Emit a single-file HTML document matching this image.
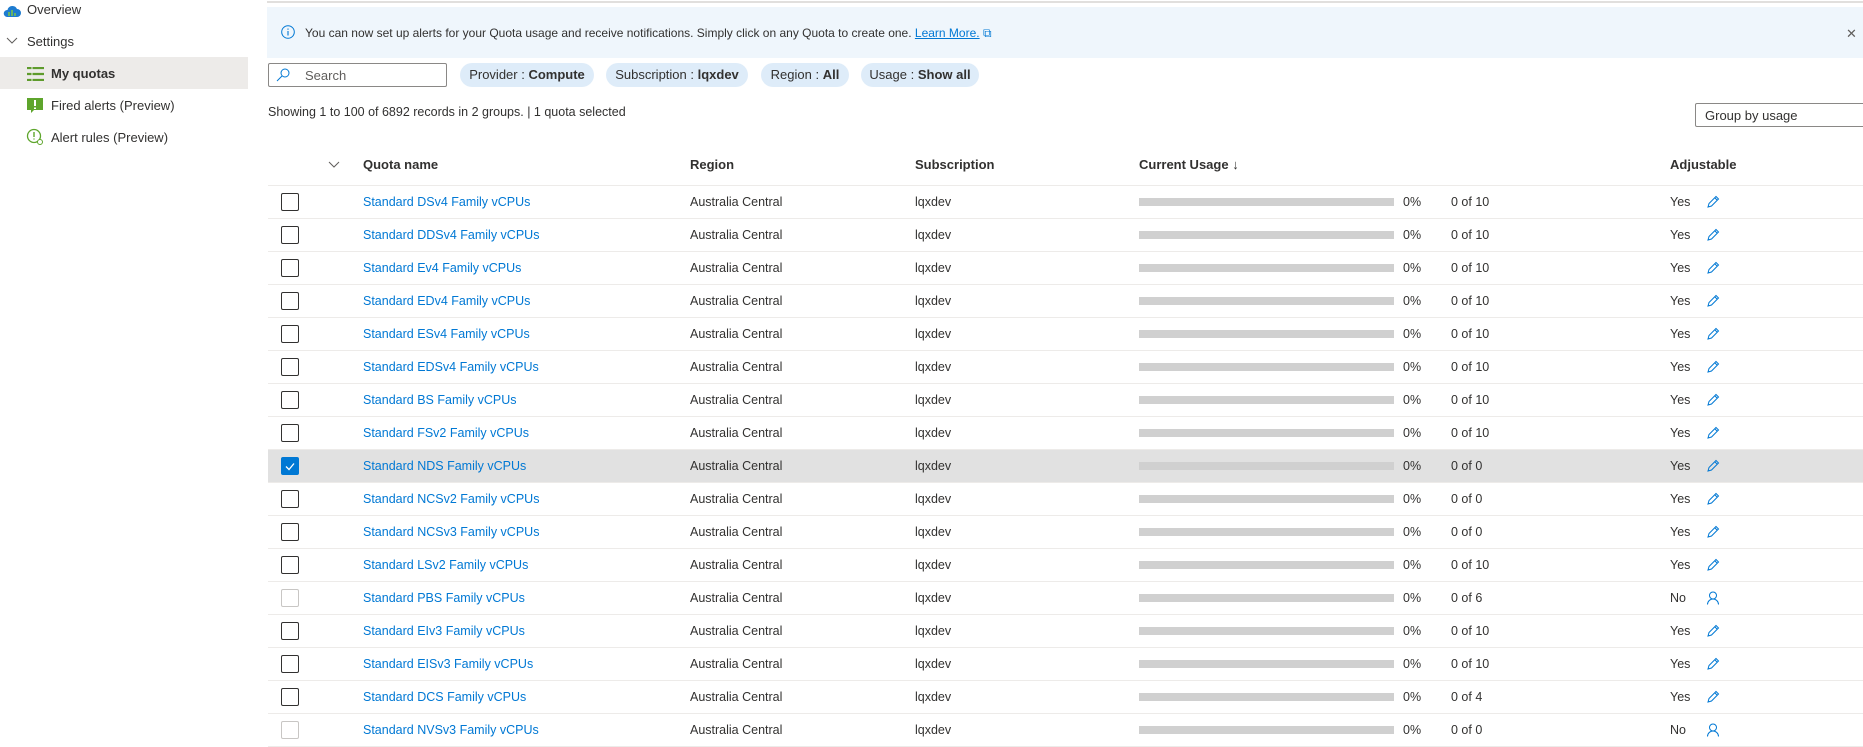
<!DOCTYPE html>
<html><head><meta charset="utf-8"><style>
*{margin:0;padding:0;box-sizing:border-box}
body{width:1863px;height:730px;overflow:hidden;background:#fff;font-family:"Liberation Sans",sans-serif;font-size:13px;color:#323130;position:relative}
.a{position:absolute;white-space:nowrap}
.side{position:absolute;left:0;top:0;width:248px;height:730px}
.row{position:absolute;left:268px;right:0;height:33px;border-bottom:1px solid #edebe9}
.row .a{top:9px}
.cb{position:absolute;left:13px;top:7px;width:18px;height:18px;border:1px solid #323130;border-radius:2px;background:#fff}
.bar{position:absolute;left:871px;top:12px;width:255px;height:8px;background:#d0d0d0}
.pill{position:absolute;top:63px;height:24px;border-radius:12px;background:#deecf9;line-height:24px;text-align:center;font-size:13px}
</style></head><body>
<div class="side">
 <svg class="a" style="left:3px;top:4px" width="18" height="14" viewBox="0 0 18 14"><path d="M4 13h10a4 4 0 0 0 0-8 5 5 0 0 0-9.5 1A3.5 3.5 0 0 0 4 13z" fill="#1d7bd0"/><path d="M6 12V8M9 12V6M12 12V9" stroke="#7fc644" stroke-width="1.5"/></svg>
 <div class="a" style="left:27px;top:2px">Overview</div>
 <svg class="a" style="left:6px;top:37px" width="12" height="8"><path d="M1 1l5 5 5-5" fill="none" stroke="#605e5c"/></svg>
 <div class="a" style="left:27px;top:34px">Settings</div>
 <div class="a" style="left:0;top:57px;width:248px;height:32px;background:#edebe9"></div>
 <svg class="a" style="left:27px;top:67px" width="17" height="14"><path d="M0 1h17M0 7h17M0 13h17" stroke="#5e9b2c" stroke-width="2.2"/><path d="M5 0v14" stroke="#edebe9" stroke-width="1"/></svg>
 <div class="a" style="left:51px;top:66px;font-weight:bold;color:#323130">My quotas</div>
 <svg class="a" style="left:27px;top:98px" width="16" height="16"><path d="M0 0h16v12H7l-3 3v-3H0z" fill="#5ea52c"/><path d="M8 2v6M8 9.5v1.5" stroke="#fff" stroke-width="2"/></svg>
 <div class="a" style="left:51px;top:98px">Fired alerts (Preview)</div>
 <svg class="a" style="left:26px;top:128px" width="18" height="18"><circle cx="8" cy="8" r="6.5" fill="none" stroke="#5ea52c" stroke-width="1.3"/><path d="M8 4v5M8 10.5v1" stroke="#5ea52c" stroke-width="1.4"/><circle cx="14" cy="14" r="2.5" fill="#fff" stroke="#5ea52c"/></svg>
 <div class="a" style="left:51px;top:130px">Alert rules (Preview)</div>
</div>
<div class="a" style="left:267px;top:1px;right:0;height:2px;background:#e1dfdd"></div>
<div class="a" style="left:267px;top:7px;right:0;height:51px;background:#eff6fc"></div>
<svg class="a" style="left:281px;top:25px" width="14" height="14"><circle cx="7" cy="7" r="6.3" fill="none" stroke="#0078d4"/><path d="M7 6v4.5M7 3.5v1.2" stroke="#0078d4" stroke-width="1.1"/></svg>
<div class="a" style="left:305px;top:26px;font-size:12px">You can now set up alerts for your Quota usage and receive notifications. Simply click on any Quota to create one. <span style="color:#0078d4;text-decoration:underline">Learn More.</span> <span style="color:#0078d4">&#x29C9;</span></div>
<div class="a" style="left:1846px;top:26px;color:#605e5c">✕</div>
<div class="a" style="left:268px;top:63px;width:179px;height:24px;border:1px solid #8a8886;border-radius:2px"></div>
<svg class="a" style="left:276px;top:68px" width="14" height="14"><circle cx="9" cy="5" r="4" fill="none" stroke="#0078d4"/><path d="M6 8l-5 5" stroke="#0078d4"/></svg>
<div class="a" style="left:305px;top:68px;color:#605e5c">Search</div>
<div class="pill" style="left:460px;width:134px">Provider : <b style="font-weight:600">Compute</b></div>
<div class="pill" style="left:606px;width:142px">Subscription : <b style="font-weight:600">lqxdev</b></div>
<div class="pill" style="left:761px;width:88px">Region : <b style="font-weight:600">All</b></div>
<div class="pill" style="left:861px;width:118px">Usage : <b style="font-weight:600">Show all</b></div>
<div class="a" style="left:268px;top:105px;font-size:12.5px">Showing 1 to 100 of 6892 records in 2 groups. | 1 quota selected</div>
<div class="a" style="left:1695px;top:103px;width:175px;height:24px;border:1px solid #8a8886;border-radius:2px"></div>
<div class="a" style="left:1705px;top:108px">Group by usage</div>
<div class="row" style="top:153px;border-bottom:1px solid #edebe9">
 <svg class="a" style="left:60px;top:8px" width="12" height="8"><path d="M1 1l5 5 5-5" fill="none" stroke="#605e5c"/></svg>
 <div class="a" style="left:95px;top:4px;font-weight:600">Quota name</div>
 <div class="a" style="left:422px;top:4px;font-weight:600">Region</div>
 <div class="a" style="left:647px;top:4px;font-weight:600">Subscription</div>
 <div class="a" style="left:871px;top:4px;font-weight:600">Current Usage ↓</div>
 <div class="a" style="left:1402px;top:4px;font-weight:600">Adjustable</div>
</div>
<div id="rows"></div>
<script>
var d=[["DSv4",10],["DDSv4",10],["Ev4",10],["EDv4",10],["ESv4",10],["EDSv4",10],["BS",10],["FSv2",10],["NDS",0],["NCSv2",0],["NCSv3",0],["LSv2",10],["PBS",6],["EIv3",10],["EISv3",10],["DCS",4],["NVSv3",0]];
var h="";
var pen='<svg width="14" height="14" viewBox="0 0 14 14"><path d="M2 12l1-3.5L10 1.5l2.5 2.5L5.5 11z M9 3l2.5 2.5" fill="none" stroke="#0078d4" stroke-width="1"/></svg>';
var per='<svg width="14" height="14" viewBox="0 0 14 14"><circle cx="7" cy="4.5" r="3.5" fill="none" stroke="#0078d4"/><path d="M1.5 13.5a5.5 5.5 0 0 1 11 0" fill="none" stroke="#0078d4"/></svg>';
d.forEach(function(r,i){
 var sel=i==8, no=(r[0]=="PBS"||r[0]=="NVSv3");
 h+='<div class="row" style="top:'+(186+i*33)+'px;'+(sel?'background:#e1e1e1':'')+'">';
 if(sel)h+='<div class="cb" style="background:#0078d4;border-color:#0078d4"><svg width="16" height="16" style="position:absolute;left:0;top:0"><path d="M4 8.5l3 3 5-6" fill="none" stroke="#fff" stroke-width="1.3"/></svg></div>';
 else h+='<div class="cb" style="'+(no?'border-color:#c8c6c4':'')+'"></div>';
 h+='<div class="a" style="left:95px;color:#0078d4;font-size:12.5px">Standard '+r[0]+' Family vCPUs</div>';
 h+='<div class="a" style="left:422px;font-size:12.5px">Australia Central</div>';
 h+='<div class="a" style="left:647px;font-size:12.5px">lqxdev</div>';
 h+='<div class="bar"></div><div class="a" style="left:1135px;font-size:12.5px">0%</div>';
 h+='<div class="a" style="left:1183px;font-size:12.5px">0 of '+r[1]+'</div>';
 h+='<div class="a" style="left:1402px;font-size:12.5px">'+(no?'No':'Yes')+'</div>';
 h+='<div class="a" style="left:1438px;top:9px">'+(no?per:pen)+'</div></div>';
});
document.getElementById("rows").innerHTML=h;
</script>
</body></html>
